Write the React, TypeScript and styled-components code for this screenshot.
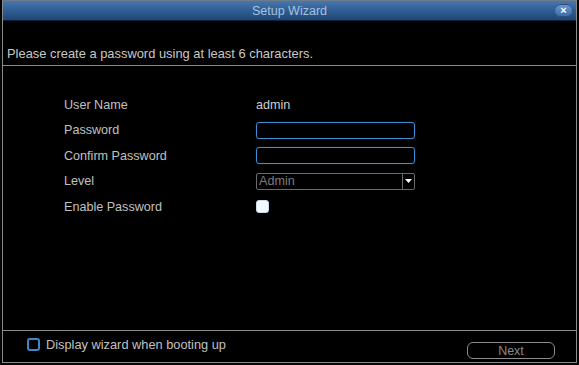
import styled, { createGlobalStyle } from 'styled-components';

const GlobalStyle = createGlobalStyle`
  html, body {
    margin: 0;
    padding: 0;
    background: #050505;
    font-family: 'Liberation Sans', Arial, sans-serif;
  }
`;

const Screen = styled.div`
  width: 579px;
  height: 365px;
  overflow: hidden;
  background: #050505;
`;

const Window = styled.div`
  display: flex;
  flex-direction: column;
  box-sizing: border-box;
  margin-left: 2px;
  width: 575px;
  height: 363px;
  border: 1px solid #8a8a8a;
  border-top-color: #6c7a8c;
  background: #000;
`;

const TitleBar = styled.div`
  position: relative;
  display: flex;
  align-items: center;
  justify-content: center;
  height: 19px;
  background: linear-gradient(#4777ae 0%, #2f5e94 50%, #1f4675 100%);
  border-bottom: 1px solid #0d2038;
`;

const Title = styled.span`
  color: #a9c2de;
  font-size: 12.5px;
`;

const CloseButton = styled.div`
  position: absolute;
  right: 3px;
  top: 3px;
  display: flex;
  align-items: center;
  justify-content: center;
  width: 19px;
  height: 13px;
  border-radius: 7px;
  background: linear-gradient(#6d9ad0, #3b6aa3);
  box-shadow: inset 0 0 0 1px #2a4f80;
  color: #ffffff;
  font-size: 11px;
  font-weight: bold;
  line-height: 1;
`;

const Instruction = styled.div`
  display: flex;
  align-items: flex-end;
  height: 40px;
  padding: 0 0 4px 4px;
  border-bottom: 1px solid #8a8a8a;
  color: #c8c8c8;
  font-size: 12.9px;
`;

const Body = styled.div`
  flex: 1;
  padding: 26px 0 0 61px;
`;

const Row = styled.div`
  display: grid;
  grid-template-columns: 192px 1fr;
  align-items: center;
  height: 25.5px;
`;

const Label = styled.span`
  color: #c0c0c0;
  font-size: 12.6px;
`;

const Value = styled.span`
  color: #cccccc;
  font-size: 12.6px;
`;

const TextBox = styled.div`
  box-sizing: border-box;
  width: 159px;
  height: 17px;
  border: 1px solid #3d8fd6;
  border-radius: 3px;
  box-shadow: 0 0 1px #1e5c94;
`;

const Select = styled.div`
  display: flex;
  box-sizing: border-box;
  width: 159px;
  height: 17px;
  border: 1px solid #6a6a6a;
  border-radius: 2px;
`;

const SelectText = styled.span`
  flex: 1;
  padding-left: 2px;
  color: #7c7c7c;
  font-size: 12.6px;
  line-height: 15px;
`;

const SelectArrow = styled.div`
  display: flex;
  align-items: center;
  justify-content: center;
  width: 11px;
  border-left: 1px solid #6a6a6a;
`;

const Check = styled.div<{ $filled?: boolean }>`
  box-sizing: border-box;
  width: 13px;
  height: 13px;
  border-radius: 3px;
  background: ${(p) => (p.$filled ? '#f4f8fc' : 'transparent')};
  border: ${(p) => (p.$filled ? '1px solid #c8dcf0' : '2px solid #3f86c6')};
`;

const Footer = styled.div`
  display: flex;
  justify-content: space-between;
  align-items: flex-start;
  height: 31px;
  border-top: 1px solid #8a8a8a;
`;

const BootOption = styled.label`
  display: flex;
  align-items: center;
  gap: 6px;
  margin: 6px 0 0 24px;
  color: #c0c0c0;
  font-size: 12.8px;
`;

const NextButton = styled.div`
  display: flex;
  align-items: center;
  justify-content: center;
  box-sizing: border-box;
  width: 88px;
  height: 17px;
  margin: 11px 21px 0 0;
  border: 1px solid #8c8c8c;
  border-radius: 6px;
  color: #8a8a8a;
  font-size: 12.5px;
`;

const App = () => {
  return (
    <Screen>
      <GlobalStyle />
      <Window>
        <TitleBar>
          <Title>Setup Wizard</Title>
          <CloseButton>×</CloseButton>
        </TitleBar>
        <Instruction>Please create a password using at least 6 characters.</Instruction>
        <Body>
          <Row>
            <Label>User Name</Label>
            <Value>admin</Value>
          </Row>
          <Row>
            <Label>Password</Label>
            <TextBox />
          </Row>
          <Row>
            <Label>Confirm Password</Label>
            <TextBox />
          </Row>
          <Row>
            <Label>Level</Label>
            <Select>
              <SelectText>Admin</SelectText>
              <SelectArrow>
                <svg width="7" height="4" viewBox="0 0 7 4">
                  <path d="M0 0 H7 L3.5 4 Z" fill="#ffffff" />
                </svg>
              </SelectArrow>
            </Select>
          </Row>
          <Row>
            <Label>Enable Password</Label>
            <Check $filled />
          </Row>
        </Body>
        <Footer>
          <BootOption>
            <Check />
            Display wizard when booting up
          </BootOption>
          <NextButton>Next</NextButton>
        </Footer>
      </Window>
    </Screen>
  );
};

export default App;
